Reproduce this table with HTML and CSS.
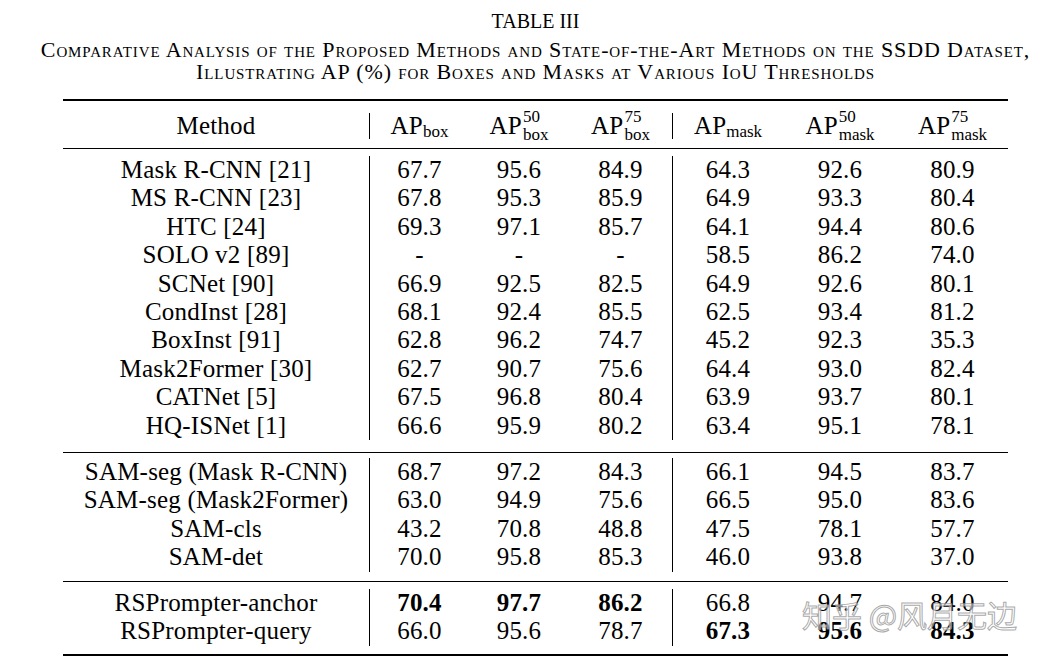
FILE: index.html
```html
<!DOCTYPE html>
<html>
<head>
<meta charset="utf-8">
<link rel="stylesheet" href="styles.css">
</head>
<body>
<div class="page">
  <div class="title">TABLE III</div>
  <div class="caption">
    <div>Comparative Analysis of the Proposed Methods and State-of-the-Art Methods on the SSDD Dataset,</div>
    <div>Illustrating AP (%) for Boxes and Masks at Various IoU Thresholds</div>
  </div>
  <div class="table">
    <div class="row head">
      <div>Method</div>
      <div class="sep">AP<sub class="sb">box</sub></div>
      <div>AP<span class="ss"><span>50</span><span>box</span></span></div>
      <div>AP<span class="ss"><span>75</span><span>box</span></span></div>
      <div class="sep">AP<sub class="sb">mask</sub></div>
      <div>AP<span class="ss"><span>50</span><span>mask</span></span></div>
      <div>AP<span class="ss"><span>75</span><span>mask</span></span></div>
    </div>
    <div class="group g1">
      <div class="row"><div>Mask R-CNN [21]</div><div class="sep">67.7</div><div>95.6</div><div>84.9</div><div class="sep">64.3</div><div>92.6</div><div>80.9</div></div>
      <div class="row"><div>MS R-CNN [23]</div><div class="sep">67.8</div><div>95.3</div><div>85.9</div><div class="sep">64.9</div><div>93.3</div><div>80.4</div></div>
      <div class="row"><div>HTC [24]</div><div class="sep">69.3</div><div>97.1</div><div>85.7</div><div class="sep">64.1</div><div>94.4</div><div>80.6</div></div>
      <div class="row"><div>SOLO v2 [89]</div><div class="sep">-</div><div>-</div><div>-</div><div class="sep">58.5</div><div>86.2</div><div>74.0</div></div>
      <div class="row"><div>SCNet [90]</div><div class="sep">66.9</div><div>92.5</div><div>82.5</div><div class="sep">64.9</div><div>92.6</div><div>80.1</div></div>
      <div class="row"><div>CondInst [28]</div><div class="sep">68.1</div><div>92.4</div><div>85.5</div><div class="sep">62.5</div><div>93.4</div><div>81.2</div></div>
      <div class="row"><div>BoxInst [91]</div><div class="sep">62.8</div><div>96.2</div><div>74.7</div><div class="sep">45.2</div><div>92.3</div><div>35.3</div></div>
      <div class="row"><div>Mask2Former [30]</div><div class="sep">62.7</div><div>90.7</div><div>75.6</div><div class="sep">64.4</div><div>93.0</div><div>82.4</div></div>
      <div class="row"><div>CATNet [5]</div><div class="sep">67.5</div><div>96.8</div><div>80.4</div><div class="sep">63.9</div><div>93.7</div><div>80.1</div></div>
      <div class="row"><div>HQ-ISNet [1]</div><div class="sep">66.6</div><div>95.9</div><div>80.2</div><div class="sep">63.4</div><div>95.1</div><div>78.1</div></div>
    </div>
    <div class="group g2">
      <div class="row"><div>SAM-seg (Mask R-CNN)</div><div class="sep">68.7</div><div>97.2</div><div>84.3</div><div class="sep">66.1</div><div>94.5</div><div>83.7</div></div>
      <div class="row"><div>SAM-seg (Mask2Former)</div><div class="sep">63.0</div><div>94.9</div><div>75.6</div><div class="sep">66.5</div><div>95.0</div><div>83.6</div></div>
      <div class="row"><div>SAM-cls</div><div class="sep">43.2</div><div>70.8</div><div>48.8</div><div class="sep">47.5</div><div>78.1</div><div>57.7</div></div>
      <div class="row"><div>SAM-det</div><div class="sep">70.0</div><div>95.8</div><div>85.3</div><div class="sep">46.0</div><div>93.8</div><div>37.0</div></div>
    </div>
    <div class="group g3">
      <div class="row"><div>RSPrompter-anchor</div><div class="sep"><b>70.4</b></div><div><b>97.7</b></div><div><b>86.2</b></div><div class="sep">66.8</div><div>94.7</div><div>84.0</div></div>
      <div class="row"><div>RSPrompter-query</div><div class="sep">66.0</div><div>95.6</div><div>78.7</div><div class="sep"><b>67.3</b></div><div><b>95.6</b></div><div><b>84.3</b></div></div>
    </div>
  </div>
</div>
<div class="watermark">知乎 @风月无边</div>
</body>
</html>
```

FILE: styles.css
```css
html, body {
  background: #fff;
}
body {
  margin: 0;
  padding: 9px 0 0 22px;
  font-family: "Liberation Serif", "Times New Roman", serif;
  color: #000;
}
.page {
  width: 1027px;
}
.title {
  text-align: center;
  font-size: 20px;
  line-height: 24px;
}
.caption {
  margin-top: 6px;
  text-align: center;
  font-size: 22px;
  line-height: 22px;
  letter-spacing: 0.88px;
  font-variant: small-caps;
}
.caption > div {
  white-space: nowrap;
}
.table {
  width: 945px;
  margin: 16px auto 0;
  border-top: 2px solid #000;
  border-bottom: 2px solid #000;
  font-size: 25px;
  letter-spacing: 0.2px;
}
.row {
  display: grid;
  grid-template-columns: 306px 100px 100px 103px 111px 114px 111px;
  text-align: center;
  line-height: 28.4px;
}
.row > div {
  white-space: nowrap;
}
.row > .sep {
  border-left: 1px solid #000;
}
.head {
  line-height: 25px;
  padding: 12px 0 9px;
  border-bottom: 1px solid #000;
}
.sb {
  font-size: 17px;
  line-height: 0;
  vertical-align: -3px;
  letter-spacing: 0;
}
.ss {
  display: inline-block;
  vertical-align: -6px;
  font-size: 17px;
  line-height: 18px;
  margin: -12px 0 -5px 1px;
  text-align: left;
  letter-spacing: 0;
}
.ss > span {
  display: block;
}
.group {
  border-bottom: 1px solid #000;
}
.g1 {
  padding: 7px 0 12px;
}
.g2 {
  padding: 5px 0 9px;
}
.g3 {
  padding: 7px 0 8px;
  border-bottom: none;
}
b {
  font-weight: bold;
}
.watermark {
  position: absolute;
  left: 802px;
  top: 596px;
  font-family: "Noto Sans CJK SC", sans-serif;
  font-size: 30px;
  line-height: 36px;
  color: rgba(255, 255, 255, 0.55);
  -webkit-text-stroke: 1px rgba(140, 140, 140, 0.75);
  white-space: nowrap;
}
```
